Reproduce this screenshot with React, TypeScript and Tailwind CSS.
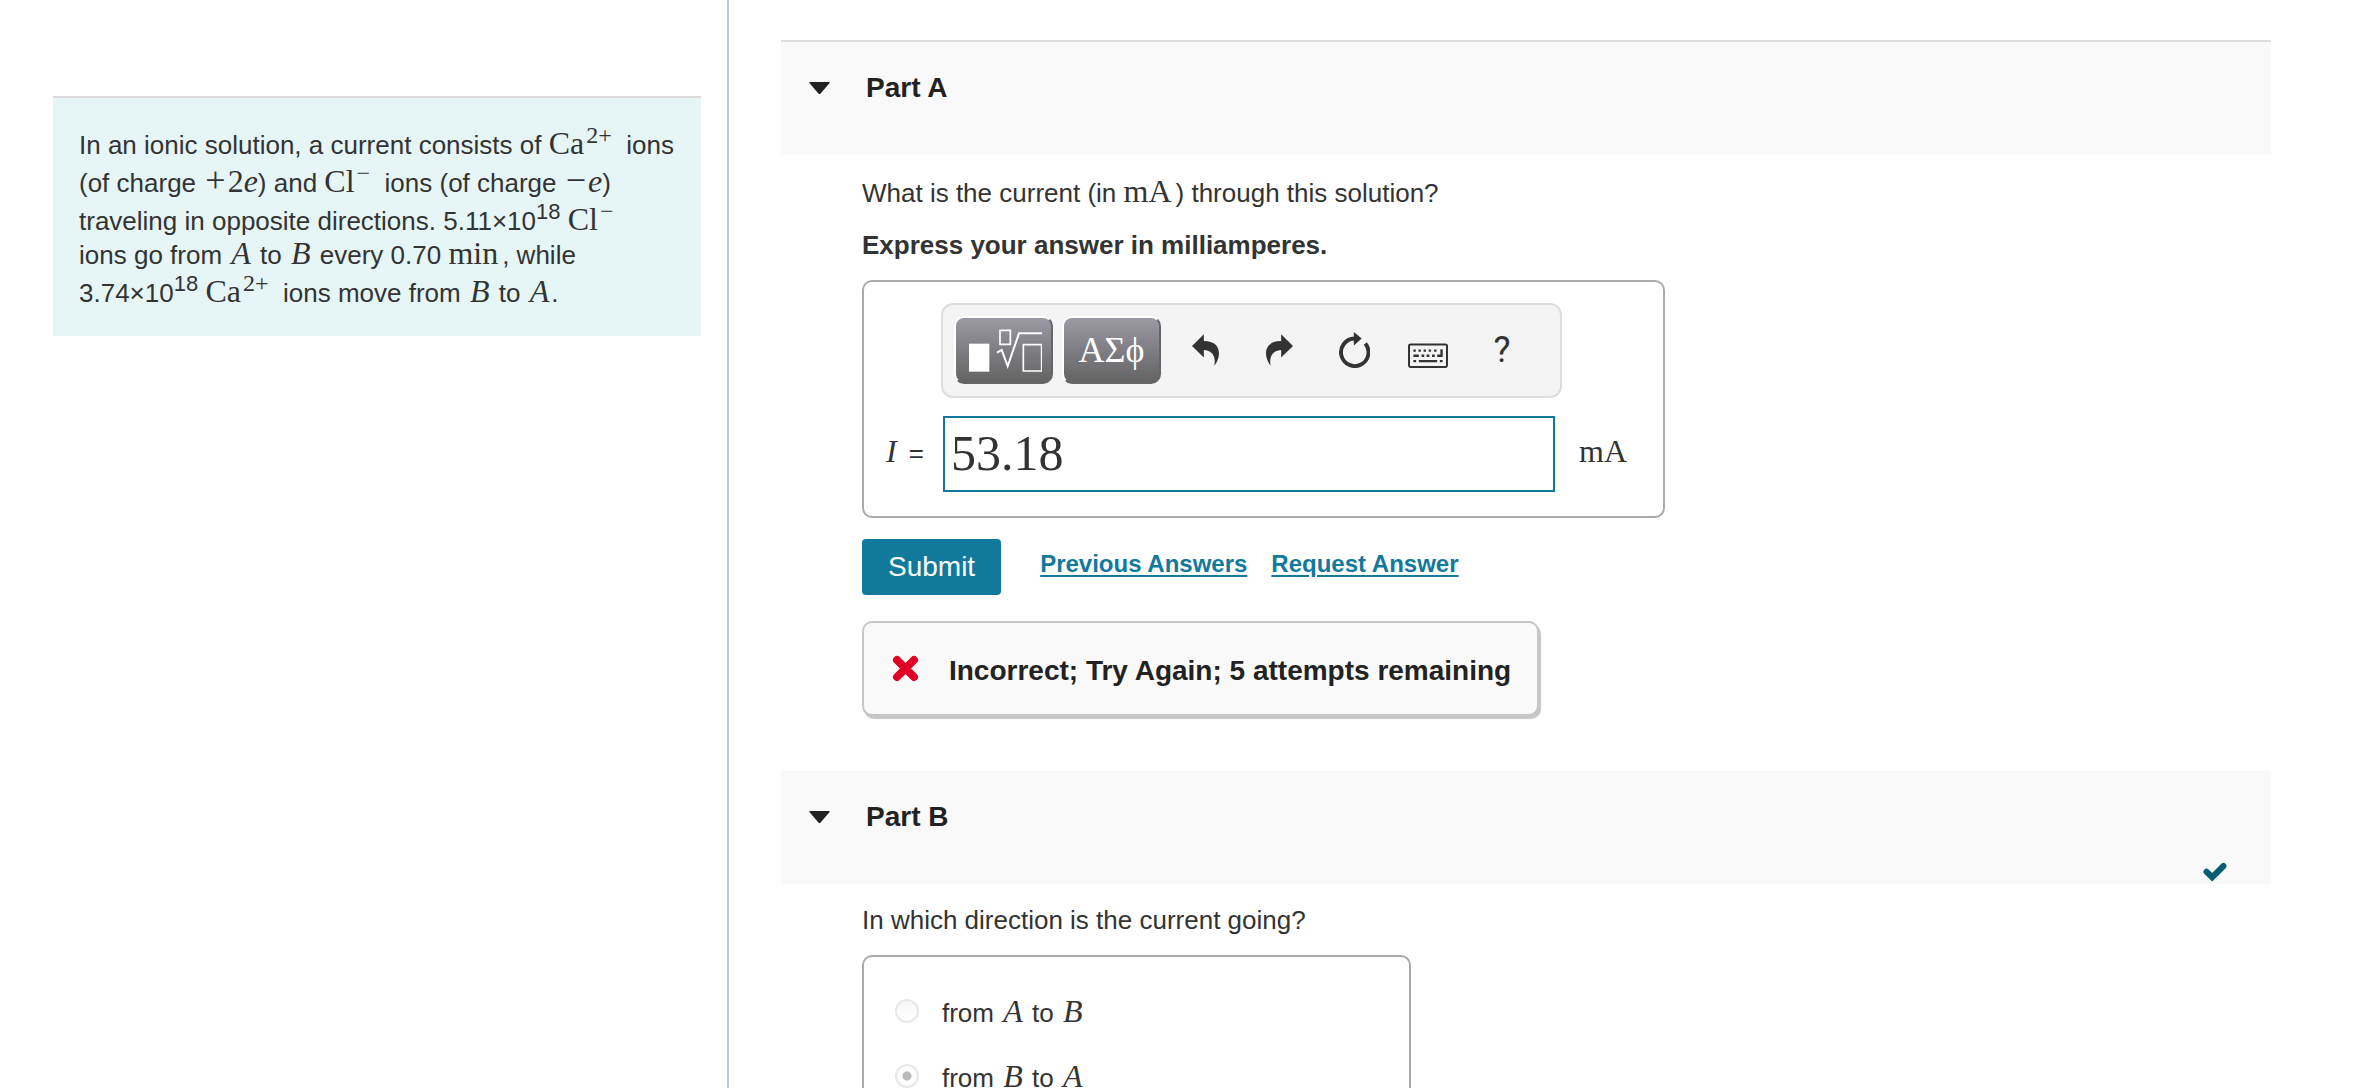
import { useState, type ReactNode } from "react";

function MathText({ children }: { children: ReactNode }) {
	return (
		<span className="font-['Liberation_Serif',serif] text-[32px] leading-7">
			{children}
		</span>
	);
}

function Variable({ name }: { name: string }) {
	return (
		<i className="px-0.5 font-['Liberation_Serif',serif] text-[32px] leading-7">
			{name}
		</i>
	);
}

function Unit({ name }: { name: string }) {
	return (
		<span className="pr-1 font-['Liberation_Serif',serif] text-[32px] leading-7">
			{name}
		</span>
	);
}

function Operator({ sign }: { sign: string }) {
	return <span className="px-0.5 text-4xl leading-5">{sign}</span>;
}

function Sup({ children }: { children: ReactNode }) {
	return (
		<span className="align-[11px] text-[22px] leading-[22px]">{children}</span>
	);
}

function IonCharge({ children }: { children: ReactNode }) {
	return (
		<span className="pl-0.5 align-[11px] text-2xl leading-[22px]">
			{children}
		</span>
	);
}

function Calcium() {
	return (
		<MathText>
			Ca<IonCharge>2+</IonCharge>
		</MathText>
	);
}

function Chloride() {
	return (
		<MathText>
			Cl<IonCharge>−</IonCharge>
		</MathText>
	);
}

function PartHeader({
	title,
	first,
	done,
}: {
	title: string;
	first?: boolean;
	done?: boolean;
}) {
	return (
		<header
			className={
				first
					? "relative border-t-2 border-[#dcdcdc] bg-[#f9f9f9] pt-[30px] pb-[51px]"
					: "relative bg-[#f9f9f9] pt-[30px] pb-[51px]"
			}
		>
			<h2 className="text-[28px] leading-8 font-bold text-[#222]">
				<button type="button" className="flex items-center pl-7">
					<svg className="mr-9 h-3 w-[21px]" viewBox="0 0 21 12" fill="#222">
						<path d="M1 0h19q1 0 .6 1l-9 10.500q-1 1-2.200 0L.4 1Q0 0 1 0z" />
					</svg>
					{title}
				</button>
			</h2>
			{done && (
				<svg
					className="absolute right-11 bottom-0.5 h-5 w-6"
					viewBox="0 0 24 20"
					fill="none"
					stroke="#055e74"
					strokeWidth="6"
					strokeLinecap="round"
					strokeLinejoin="miter"
				>
					<path d="M3.500 9.800l5.700 5.400L20.500 4" />
				</svg>
			)}
		</header>
	);
}

function ToolButton({
	label,
	children,
}: {
	label: string;
	children: ReactNode;
}) {
	return (
		<button
			type="button"
			aria-label={label}
			className="flex h-[67px] w-[74px] items-center justify-center text-[#333]"
		>
			{children}
		</button>
	);
}

function PaletteButton({
	label,
	children,
}: {
	label: string;
	children: ReactNode;
}) {
	return (
		<button
			type="button"
			aria-label={label}
			className="flex h-[68px] w-[99px] items-center justify-center rounded-[10px] border-2 border-t-white border-r-[#66656a] border-b-[#666] border-l-white bg-linear-to-b from-[#9b99a4] to-[#646464] text-white"
		>
			{children}
		</button>
	);
}

function UndoIcon() {
	return (
		<path
			d="M0 36L36 0v21c32 0 46 16 46 38 0 14-7 28-14 37 4-20 0-46-32-48v23z"
			fill="currentColor"
		/>
	);
}

function Toolbar() {
	return (
		<div className="ml-[77px] flex h-[95px] max-w-[621px] items-center rounded-xl border-2 border-[#ddd] bg-[#f4f4f4] pb-0.5 pl-[11px]">
			<div className="mr-2 flex gap-[9px]">
				<PaletteButton label="Templates">
					<svg className="h-[44px] w-[78px]" viewBox="0 0 234 132" fill="none">
						<path d="M15 47h61v84H15z" fill="#fff" />
						<path
							d="M110 7h31v42h-31zM180 50h55v79h-55z"
							transform="translate(-2 0)"
							stroke="#fff"
							strokeWidth="5"
						/>
						<path
							d="M99 74l14-8 18 48 34-98h72"
							stroke="#fff"
							strokeWidth="6"
						/>
					</svg>
				</PaletteButton>
				<PaletteButton label="Symbols">
					<span className="font-['Liberation_Serif',serif] text-4xl">
						ΑΣϕ
					</span>
				</PaletteButton>
			</div>
			<ToolButton label="Undo">
				<svg className="h-8 w-[27px]" viewBox="0 0 82 96">
					<UndoIcon />
				</svg>
			</ToolButton>
			<ToolButton label="Redo">
				<svg className="h-8 w-[27px]" viewBox="0 0 82 96">
					<g transform="matrix(-1 0 0 1 82 0)">
						<UndoIcon />
					</g>
				</svg>
			</ToolButton>
			<ToolButton label="Reset">
				<svg className="h-9 w-8" viewBox="0 0 97 110" fill="none">
					<path
						d="M83 35A42 42 0 1 1 50 20"
						stroke="currentColor"
						strokeWidth="12"
					/>
					<path d="M48 0l24 20-24 21z" fill="currentColor" />
				</svg>
			</ToolButton>
			<ToolButton label="Keyboard shortcuts">
				<svg className="h-9 w-10" viewBox="0 0 118 106" fill="none">
					<rect
						x="3"
						y="37"
						width="112"
						height="66"
						rx="4"
						stroke="currentColor"
						strokeWidth="6"
					/>
					<g stroke="currentColor" strokeWidth="7">
						<path d="M16 55h7M31 55h7M46 55h7M61 55h7M77 55h7" />
						<path d="M16 70h16M40 70h8M55 70h8M71 70h8M86 70h16M99 51v22" />
						<path d="M16 86h8M32 86h54M94 86h8" />
					</g>
				</svg>
			</ToolButton>
			<ToolButton label="Help">
				<span className="font-[Roboto,sans-serif] text-4xl">?</span>
			</ToolButton>
		</div>
	);
}

function DirectionOption({
	from,
	to,
	checked,
	onSelect,
}: {
	from: string;
	to: string;
	checked: boolean;
	onSelect: () => void;
}) {
	return (
		<label className="flex items-center">
			<input
				type="radio"
				name="direction"
				checked={checked}
				onChange={onSelect}
				className="mr-[23px] mb-1 size-6 appearance-none rounded-full border-2 border-[#e8e8e8] bg-linear-to-b from-[#f6f6f6] to-white checked:bg-[radial-gradient(circle,#bbb_4px,#fcfcfc_5px)]"
			/>
			<span>
				from <Variable name={from} /> to <Variable name={to} />
			</span>
		</label>
	);
}

export default function App() {
	const [answer, setAnswer] = useState("53.18");
	const [direction, setDirection] = useState("BA");

	return (
		<div className="flex h-screen overflow-hidden bg-white font-['Liberation_Sans',Arial,sans-serif] text-[26px] leading-[34px] text-[#333]">
			<aside className="w-[30.85%] shrink-0 border-r-2 border-[#b9cbdc] pt-24 pr-[26px] pl-[53px]">
				<div className="border-t-2 border-[#dcdcdc] bg-[#e6f6f7] py-[26px] pr-4 pl-[26px]">
					<p>
						In an ionic solution, a current consists of <Calcium />
						&nbsp; ions (of charge{" "}
						<MathText>
							<Operator sign="+" />2<i>e</i>
						</MathText>
						) and <Chloride />
						&nbsp; ions (of charge{" "}
						<MathText>
							<Operator sign="−" />
							<i>e</i>
						</MathText>
						) traveling in opposite directions. 5.11×10<Sup>18</Sup>{" "}
						<Chloride />
						<br />
						ions go from <Variable name="A" /> to <Variable name="B" /> every
						0.70 <Unit name="min" />, while 3.74×10<Sup>18</Sup> <Calcium />
						&nbsp; ions move from <Variable name="B" /> to{" "}
						<Variable name="A" />.
					</p>
				</div>
			</aside>

			<main className="min-w-0 flex-1 pt-10 pr-[92px] pl-[52px]">
				<section>
					<PartHeader title="Part A" first />
					<div className="pt-[21px] pb-[55px] pl-[81px]">
						<p>
							What is the current (in <Unit name="mA" />) through this
							solution?
						</p>
						<p className="mt-[18px] font-bold">
							Express your answer in milliamperes.
						</p>

						<div className="mt-[18px] max-w-[803px] rounded-[10px] border-2 border-[#aaa] pt-[21px] pb-6">
							<Toolbar />
							<div className="mt-[18px] flex items-center">
								<label
									htmlFor="current"
									className="flex w-[79px] items-baseline gap-2.5 pb-0.5 pl-5"
								>
									<Variable name="I" />
									<span>=</span>
								</label>
								<input
									id="current"
									type="text"
									value={answer}
									onChange={(e) => setAnswer(e.target.value)}
									className="h-[76px] min-w-0 flex-1 border-2 border-[#117a9c] pb-0.5 pl-1.5 font-['Liberation_Serif',serif] text-[50px] outline-none"
								/>
								<span className="w-[108px] pb-0.5 pl-6">
									<Unit name="mA" />
								</span>
							</div>
						</div>

						<div className="mt-[21px] flex items-center text-2xl font-bold text-[#117a9c]">
							<button
								type="button"
								className="mr-[39px] h-14 rounded bg-[#117a9c] px-[26px] text-[28px] font-normal text-white"
							>
								Submit
							</button>
							<a
								href="#previous"
								className="mr-6 pb-1.5 underline underline-offset-3"
							>
								Previous Answers
							</a>
							<a href="#request" className="pb-1.5 underline underline-offset-3">
								Request Answer
							</a>
						</div>

						<div className="mt-[26px] flex h-[95px] w-fit items-center rounded-[10px] border-2 border-[#c6c6c6] bg-[#f9f9f9] pt-1 pr-[26px] pl-7 text-[28px] font-bold text-[#222] shadow-[2px_3px_1px_#c6c6c6]">
							<svg
								className="mr-[30px] mb-1 size-[27px]"
								viewBox="0 0 27 27"
								stroke="#e00025"
								strokeWidth="8"
								strokeLinecap="round"
							>
								<path d="M5 5l17 17M22 5L5 22" />
							</svg>
							Incorrect; Try Again; 5 attempts remaining
						</div>
					</div>
				</section>

				<section>
					<PartHeader title="Part B" done />
					<div className="pt-[19px] pl-[81px]">
						<p>In which direction is the current going?</p>
						<div className="mt-[18px] flex max-w-[549px] flex-col gap-[31px] rounded-[10px] border-2 border-[#aaa] py-[39px] pl-[31px]">
							<DirectionOption
								from="A"
								to="B"
								checked={direction === "AB"}
								onSelect={() => setDirection("AB")}
							/>
							<DirectionOption
								from="B"
								to="A"
								checked={direction === "BA"}
								onSelect={() => setDirection("BA")}
							/>
						</div>
					</div>
				</section>
			</main>
		</div>
	);
}
